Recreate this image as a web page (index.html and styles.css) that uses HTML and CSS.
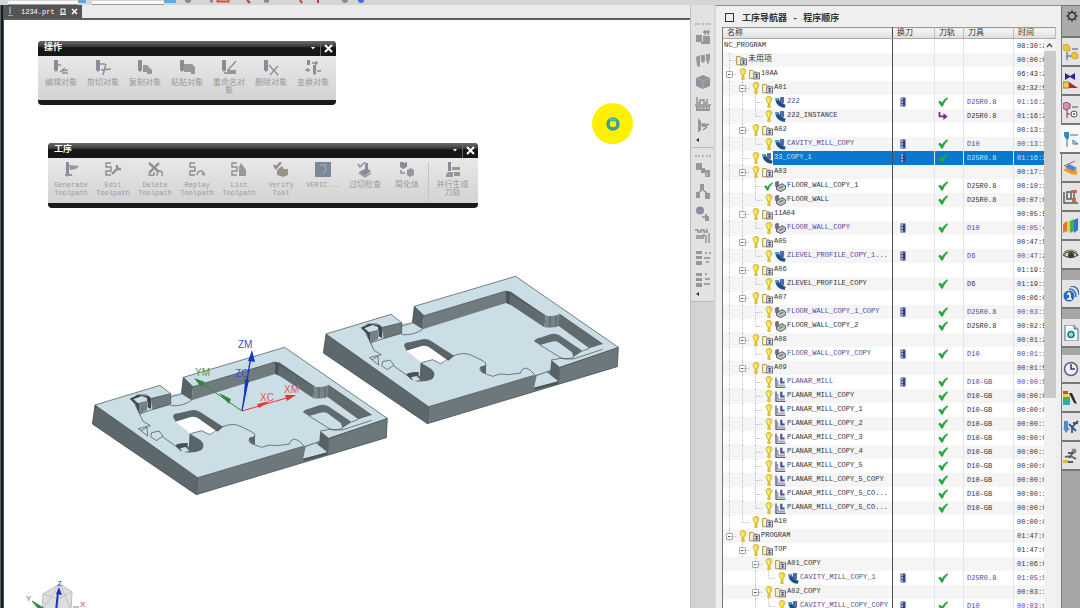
FILE: index.html
```
<!DOCTYPE html>
<html lang="zh-CN">
<head>
  <meta charset="UTF-8">
  <title>1234.prt</title>
  <link rel="stylesheet" href="styles.css">
</head>
<body>

  <!-- shared icons -->
  <svg class="sprite" aria-hidden="true">
    <symbol id="key" viewBox="0 0 8 12">
      <path d="M4 0.5C1.6 0.5 0.8 2 1.2 3.6L3 7.4V8.4H5V7.4L6.8 3.6C7.2 2 6.4 0.5 4 0.5Z" fill="#f3d83c" stroke="#c6a51d" stroke-width=".7"/>
      <path d="M2.8 2L3.6 6" stroke="#fffbc0" stroke-width="1"/>
      <circle cx="4" cy="10.4" r="1.5" fill="#f0cb25" stroke="#c09c18" stroke-width=".5"/>
    </symbol>
    <symbol id="check" viewBox="0 0 10 10">
      <path d="M0.6 5L2.2 4L4 6.2C5.2 3.8 7 2 9.4 0.8L9.5 1.8C7.4 3.6 5.6 6 4.6 9.2H3.4C2.8 7.6 1.8 6.2 0.6 5Z" fill="#22a63f" stroke="#22a63f" stroke-width=".8"/>
    </symbol>
    <symbol id="turn" viewBox="0 0 10 10">
      <path d="M1.5 1V5.4H6" fill="none" stroke="#7d2a8c" stroke-width="1.8"/>
      <path d="M5.4 2.2L9.6 5.6L5.4 9Z" fill="#7d2a8c"/>
    </symbol>
    <symbol id="change" viewBox="0 0 6 10">
      <rect x=".5" y=".5" width="5" height="9" fill="#3c4784"/>
      <rect x="1" y="1" width="2" height="8" fill="#96a2dc"/>
      <path d="M1 3.5H5M1 6.5H5" stroke="#262d60" stroke-width=".6"/>
    </symbol>
    <symbol id="folder" viewBox="0 0 11 10">
      <path d="M.6 1H4L5 2.4H7.4V9.2H.6Z" fill="#fbf3c4" stroke="#a28f4b" stroke-width=".9"/>
      <rect x="4.8" y="3.4" width="5.8" height="6" fill="#eee" stroke="#55556a" stroke-width=".8"/>
      <path d="M6 5.2H9.4M6 7.4H9.4M7.7 4.4V8.6" stroke="#444a70" stroke-width=".9"/>
    </symbol>
    <symbol id="cavity" viewBox="0 0 11 11">
      <path d="M.4 1.2C.4 6 3 10.2 9.8 10.7L10.6 7.4C6.8 7.6 4.4 5 4 1.6Z" fill="#1c4f86"/>
      <path d="M.4 1.2L4 1.6L3.4 3.4L.7 3.6Z" fill="#37a9cc"/>
      <path d="M5.4.4H8.6V5.6L7 7.2L5.4 5.6Z" fill="#5268b0" stroke="#27356e" stroke-width=".6"/>
      <path d="M8.6 6.6L10.4 8.4" stroke="#37a9cc"/>
    </symbol>
    <symbol id="floor" viewBox="0 0 11 11">
      <path d="M.6 1L3.4 .4V6L.6 5.4Z" fill="#73777e" stroke="#3e4148" stroke-width=".6"/>
      <path d="M1.6 6L7 2.6L10.6 4.8V7.8L5.8 10.6L1.6 8.6Z" fill="#c1c3c6" stroke="#474a50" stroke-width=".9"/>
      <path d="M3.4 7L7.4 4.4L9 5.6L5.4 8Z" fill="#82868c"/>
    </symbol>
    <symbol id="planar" viewBox="0 0 11 11">
      <path d="M1 .5V10.2H10.4" fill="none" stroke="#31335e" stroke-width="1.1"/>
      <path d="M2.8 3V8.2H10" fill="none" stroke="#6a6d96" stroke-width=".9"/>
      <path d="M5.2 .8H7.4V6.6H5.2ZM7.4 4.4H9.6V6.6H7.4Z" fill="#4d4f91"/>
    </symbol>
    <symbol id="part" viewBox="0 0 960 510">
      <path d="M48 207L243 148L275 175L309 172L313 124L617 34L925 247L922 305L352 476L40 264Z" fill="#cbdee5"/>
      <path d="M48 207L356 425L352 476L40 264Z" fill="#5c686b"/>
      <path d="M356 425L675 331L925 247L922 305L352 476Z" fill="#6c787b"/>
      <!-- upper pocket walls -->
      <path d="M313 124L342 152L338 193L307 173Z" fill="#566265"/>
      <path d="M342 152L588 78L588 114L338 193Z" fill="#6f7b7e"/>
      <path d="M588 78L602 80L602 120L588 114Z" fill="#4a5557"/>
      <path d="M600 78L707 152L703 187L598 117Z" fill="#5f6b6e"/>
      <path d="M707 152Q735 155 748 147V182Q730 190 703 187Z" fill="#788588"/>
      <path d="M748 147L878 237L838 250L745 182Z" fill="#5f6b6e"/>
      <path d="M275 183L309 173M275 209Q310 212 338 193M313 124L342 152M720 154V187M738 152V186" class="edge-line"/>
      <!-- small pocket -->
      <path d="M672 229Q676 220 690 218L724 207Q738 204 748 211L818 258L790 276L786 262L745 232Q738 226 724 230L690 240Z" fill="#5f6b6e"/>
      <path d="M690 240L750 277Q768 288 792 276M818 258L838 250" class="edge-line"/>
      <!-- through window -->
      <path d="M282 242Q284 232 298 232L338 223Q354 220 368 231L432 272L412 290L365 253Q352 240 335 245L290 257Z" fill="#596568"/>
      <path d="M290 257L335 243Q350 239 365 252L416 288L392 296L368 284L335 293Z" fill="#fff"/>
      <path d="M335 293L368 284L392 296L364 304Z" fill="#cbdee5"/>
      <path d="M333 293L364 312Q382 328 366 343Q342 353 313 348L330 330Z" fill="#596568"/>
      <path d="M288 329Q296 320 326 321L326 338L306 346Z" fill="#465154"/>
      <path d="M303 337L320 333L331 345L311 349Z" fill="#cbdee5"/>
      <path d="M250 302L288 329M335 293L368 284L392 296L432 272M333 293V330" class="edge-line"/>
      <!-- clamp blocks -->
      <path d="M218 187L275 173V205L220 221Z" fill="#6c787b"/>
      <path d="M152 188L178 176L208 180L218 190L216 219L206 214L206 196L180 204L181 234L170 206Z" fill="#3e484b"/>
      <path d="M163 190L188 180L204 186L204 195L177 202Z" fill="#cbdee5"/>
      <path d="M180 204L205 196V222L181 234Z" fill="#748185"/>
      <path d="M243 148L275 173L218 187L200 176L170 178M168 206Q184 236 192 256L214 269L178 278L206 300L204 274L186 284M215 302L218 290L240 285L252 300L232 314ZM220 221L275 205V173M181 234L220 221" class="edge-line"/>
      <!-- step contour -->
      <path d="M432 272Q460 260 482 270L516 286Q530 292 528 302L512 306Q504 320 526 326L548 334L570 327L596 329L632 324Q632 312 648 309Q660 311 676 331" class="edge-line"/>
      <path d="M512 306L528 301V326Q508 322 512 306Z" fill="#596568"/>
      <!-- front notch -->
      <path d="M724 285L750 307L747 352L720 328Z" fill="#566265"/>
      <path d="M672 368L680 333L711 322L745 349Z" fill="#cbdee5"/>
      <path d="M672 368L745 349V356L674 374Z" fill="#485356"/>
      <path d="M724 285L752 280L790 282L878 253M750 307L925 247" class="edge-line"/>
      <path d="M313 124L617 34L925 247L922 305L352 476L40 264L48 207L243 148M307 173L313 124M48 207L356 425L672 331M356 425L352 476M342 152L588 78L707 152M748 147L878 237" class="edge-line"/>
    </symbol>
  </svg>

  <div class="app">
    <header class="ribbon">
      <svg width="400" height="5" aria-hidden="true">
        <path d="M8 2.5H78M92 2.5H164" stroke="#f8f8f8" stroke-width="3"/>
        <path d="M8 4.5H78M92 4.5H164" stroke="#9a9a9a"/>
        <rect x="78" width="8" height="3" fill="#62a9da"/><rect x="164" width="12" height="3" fill="#62a9da"/>
        <circle cx="188" r="3" fill="#8a8a8a"/><path d="M217.500 0V1.500H228.500V0" fill="none" stroke="#d54d3c" stroke-width="2"/>
        <path d="M247 0L250 3M318 0V3M300 0L302 3" stroke="#c3373a" stroke-width="2"/>
        <path d="M264 1H269M210 1H213" stroke="#888" stroke-width="3"/>
        <circle cx="345" r="3" fill="#8d8d8d"/><circle cx="361" r="3" fill="#416fdc"/>
      </svg>
    </header>

    <div class="workspace">
      <div class="frame-edge"></div>

      <main class="graphics">
        <nav class="file-tabs">
          <button class="file-tab">
            <svg width="7" height="10" viewBox="0 0 7 10"><path d="M3 0V7" stroke="#8e8bc4" stroke-width="2"/><path d="M1 8.500H6" stroke="#9aa" /></svg>
            <span>1234.prt</span>
            <svg width="6" height="8" viewBox="0 0 6 8"><rect x="1" y="1" width="4" height="4" fill="none" stroke="#fff"/><path d="M0 6.500H6" stroke="#fff"/></svg>
            <svg width="7" height="7" viewBox="0 0 7 7"><path d="M1 1L6 6M6 1L1 6" stroke="#fff" stroke-width="1.600"/></svg>
          </button>
        </nav>

        <div class="viewport">
          <svg class="scene" aria-hidden="true">
            <g transform="translate(-4 -20)">
              <use href="#part" x="310" y="265" width="320" height="170"/>
              <use href="#part" x="79" y="336" width="320" height="170"/>

              <!-- work coordinate system -->
              <path d="M242 411L251 356" stroke="#1637c4" stroke-width="1.400"/>
              <path d="M252 350L255 362L248 361ZM245 379L249 380L243 408Z" fill="#1637c4"/>
              <path d="M242 411L290 397" stroke="#e23a36"/>
              <path d="M296 395L285 395L287 401ZM270 401L257 404L259 408Z" fill="#e23a36"/>
              <path d="M242 411L200 382" stroke="#2c8a35"/>
              <path d="M194 378L205 382L201 387ZM219 393L231 399L229 404Z" fill="#2c8a35"/>
              <g class="axis-text">
                <text x="238" y="348" fill="#3355cc">ZM</text>
                <text x="235" y="377" fill="#3355cc">ZC</text>
                <text x="260" y="401" fill="#e05550">XC</text>
                <text x="284" y="393" fill="#e05550">XM</text>
                <text x="195" y="376" fill="#4c9a55">YM</text>
              </g>

              <!-- view triad -->
              <path d="M43 594L60 584L72 592L71 612H42Z" fill="#dedede" stroke="#bcbcbc"/>
              <path d="M43 594L58 599L72 592M58 599V610M60 584L42 610M60 584L71 610" fill="none" stroke="#c2c2c2"/>
              <path d="M56 611L58 592" stroke="#1637c4" stroke-width="2"/>
              <path d="M59 587L62 595L56 594Z" fill="#1637c4"/>
              <path d="M32 601L45 609L39 609Z" fill="#2c8a35" stroke="#2c8a35"/>
              <path d="M73 607H79" stroke="#888"/>
              <g class="triad-text">
                <text x="57" y="586" fill="#3355cc">Z</text>
                <text x="26" y="601" fill="#4c7a55">Y</text>
                <text x="80" y="607" fill="#855">X</text>
              </g>
            </g>
          </svg>

          <div class="pointer">
            <svg width="14" height="14" viewBox="0 0 14 14"><circle cx="7" cy="7" r="5" fill="none" stroke="#379c9c" stroke-width="3.400"/><path d="M3.500 3.500A5 5 0 0 1 10.500 3.500" fill="none" stroke="#45c3c8" stroke-width="2"/></svg>
          </div>

          <section class="palette palette-object">
            <div class="palette-head">
              <h2>操作</h2>
              <button class="head-menu" aria-label="选项"><svg width="6" height="4"><path d="M1 0H5L3 2.500Z" fill="#fff"/></svg></button>
              <button class="head-close" aria-label="关闭"><svg width="9" height="9"><path d="M1 1L8 8M8 1L1 8" stroke="#fff" stroke-width="2"/></svg></button>
            </div>
            <div class="palette-body">
              <button class="tool"><svg viewBox="0 0 16 16"><path class="pin" d="M1 0H5V10L3 12L1 10Z"/><path d="M5 5H8M7 12L12 8M9 13H15M8 11L15 10" class="ln"/></svg>编辑对象</button>
              <button class="tool"><svg viewBox="0 0 16 16"><path class="pin" d="M1 0H5V10L3 12L1 10Z"/><path d="M5 4H10M11 4L8 15M6 10L16 9" class="ln"/></svg>剪切对象</button>
              <button class="tool"><svg viewBox="0 0 16 16"><path class="pin" d="M1 0H5V10L3 12L1 10Z"/><path class="fl" d="M6 5H10L12 7V12H6ZM10 8H13L15 10V14H10Z"/></svg>复制对象</button>
              <button class="tool"><svg viewBox="0 0 16 16"><path class="pin" d="M1 0H5V10L3 12L1 10Z"/><path class="fl" d="M5 4H13L16 7V14H12V12H5Z"/></svg>粘贴对象</button>
              <button class="tool"><svg viewBox="0 0 16 16"><path class="pin" d="M1 0H5V10L3 12L1 10Z"/><path d="M15 1L7 10M3 13H15M7 9V14" class="ln"/><path class="fl" d="M8 10H15V14H5Z"/></svg>重命名对象</button>
              <button class="tool"><svg viewBox="0 0 16 16"><path class="pin" d="M1 0H5V10L3 12L1 10Z"/><path d="M6 5L15 15M15 6L7 15" class="ln"/></svg>删除对象</button>
              <button class="tool"><svg viewBox="0 0 16 16"><path class="pin" d="M2 0H5V5H2ZM8 5H11V14L9 15L8 13Z"/><path d="M0 10H5M3 8V12M7 3H13M11 1V5M12 11H16" class="ln"/></svg>变换对象</button>
            </div>
          </section>

          <section class="palette palette-operation">
            <div class="palette-head">
              <h2>工序</h2>
              <button class="head-menu" aria-label="选项"><svg width="6" height="4"><path d="M1 0H5L3 2.500Z" fill="#fff"/></svg></button>
              <button class="head-close" aria-label="关闭"><svg width="9" height="9"><path d="M1 1L8 8M8 1L1 8" stroke="#fff" stroke-width="2"/></svg></button>
            </div>
            <div class="palette-body">
              <button class="tool"><svg viewBox="0 0 16 16"><path class="pin" d="M3 0H6V13L4 15L3 13Z"/><path class="fl" d="M6 3L16 4L13 7L7 8ZM2 12H9V14H2Z"/></svg>Generate Toolpath</button>
              <button class="tool"><svg viewBox="0 0 16 16"><path d="M6 1H1V5H6V9H1V13H6" class="ln"/><path d="M7 12L13 6M12 3V7H16" class="ln thick"/></svg>Edit Toolpath</button>
              <button class="tool"><svg viewBox="0 0 16 16"><path d="M2 1L12 10M12 1L2 11" class="ln thick"/><path d="M1 13H7V10M10 14Q10 9 13 9Q16 9 15 14" class="ln"/></svg>Delete Toolpath</button>
              <button class="tool"><svg viewBox="0 0 16 16"><path d="M6 1H1V5H6V9H1V13H6M8 13Q9 8 13 9L15 13" class="ln"/><path class="fl" d="M12 12L16 14V10Z"/></svg>Replay Toolpath</button>
              <button class="tool"><svg viewBox="0 0 16 16"><path d="M6 1H1V5H6V9H1V13H6" class="ln"/><path class="fl" d="M8 14V5L10 1L15 8V14Z"/></svg>List Toolpath</button>
              <button class="tool"><svg viewBox="0 0 16 16"><path d="M1 3L3 6L8 0" class="ln thick"/><path class="warm" d="M4 8L9 4L11 7H15V13L10 15L4 13Z"/></svg>Verify Tool</button>
              <button class="tool"><svg viewBox="0 0 16 16"><rect width="16" height="15" fill="#7a8898"/><path d="M5 3H10L11 8L8 12" fill="none" stroke="#8fa0ad" stroke-width="2"/></svg>VERIC...</button>
              <button class="tool cjk"><svg viewBox="0 0 16 16"><path d="M1 2L3 5L8 0" class="ln"/><path class="pin" d="M8 1H11V7L14 9L8 14L2 10L8 7Z"/><path d="M2 11L8 15L14 11" class="ln"/></svg>过切检查</button>
              <button class="tool cjk"><svg viewBox="0 0 16 16"><path class="pin" d="M1 0H4L5 1L8 0V5L4 7L1 5Z"/><path class="fl" d="M8 8L12 6L15 8V13L11 15L8 13Z"/><path d="M2 8V11H6" class="ln"/></svg>简化体</button>
              <button class="tool cjk parallel"><svg viewBox="0 0 16 16"><path class="pin" d="M3 0H6V9H3Z"/><path class="fl" d="M7 5H15V8H7ZM3 10H8V15H1V12ZM9 10H15V14H9Z"/></svg>并行生成刀轨</button>
            </div>
          </section>
        </div>
      </main>

      <aside class="side-tools">
        <div class="tool-group">
          <i class="grip"></i>
          <button aria-label="创建几何体"><svg viewBox="0 0 16 16"><path d="M1 5H7V12H1ZM8 6H15V14H6V12H8Z" class="fl"/><path d="M8 2H15M10 0V5M13 0V5" class="ln"/></svg></button>
          <button aria-label="创建刀具"><svg viewBox="0 0 16 16"><path d="M1 5L5 3V15L2 14ZM6 3H10V9L8 11L6 9ZM11 2H15V7L13 13L11 8Z" class="fl"/></svg></button>
          <button aria-label="创建工件"><svg viewBox="0 0 16 16"><path d="M1 4L8 1L15 4V12L8 15L1 12Z" fill="#92909a"/><path d="M1 4L8 7L15 4M8 7V15" fill="none" stroke="#aaa8b0"/></svg></button>
          <button aria-label="创建方法"><svg viewBox="0 0 16 16"><path d="M2 1V7H5V4H9V7H12V3M0 9H16" class="ln"/><path d="M1 10H15V15H1Z" class="fl"/><path d="M4 11V13M7 11V13M10 11V13M13 11V13" stroke="#ddd"/></svg></button>
          <button aria-label="创建工序"><svg viewBox="0 0 16 16"><path d="M3 0L6 3V12L3 15ZM6 5L15 6L11 9H7Z" class="fl"/><path d="M8 12L12 9" class="ln"/></svg></button>
          <i class="more"></i>
        </div>
        <div class="tool-group">
          <i class="grip"></i>
          <button aria-label="几何视图"><svg viewBox="0 0 16 16"><path d="M1 1H7V6H10V11H6V8H1ZM10 8H15V15H10Z" class="fl"/><path d="M12 10V14" stroke="#ccc"/></svg></button>
          <button aria-label="程序视图"><svg viewBox="0 0 16 16"><path d="M5 0H9V6H5ZM1 8H5V14H1ZM10 9H15V15H10Z" class="fl"/><path d="M7 6L3 9M8 6L12 9" class="ln"/></svg></button>
          <button aria-label="机床视图"><svg viewBox="0 0 16 16"><circle cx="5" cy="4.500" r="4" fill="#8f8d9c"/><path d="M10 8H12V10H14V15H10Z" class="fl"/><path d="M7 11H10" class="ln"/></svg></button>
          <button aria-label="方法视图"><svg viewBox="0 0 16 16"><path d="M0 2H3V4H6V2H9V4H12V1M1 8H9V6M11 7V15M14 5V15M1 10H9" class="ln"/></svg></button>
          <button aria-label="全部展开"><svg viewBox="0 0 16 16"><path d="M1 1H7V4H1ZM1 6H7V9H1ZM1 11H7V15H1Z" class="fl"/><path d="M10 3H12M14 3H16M9 8H15M11 12H14" class="ln"/></svg></button>
          <button aria-label="全部折叠"><svg viewBox="0 0 16 16"><path d="M1 1H7V4H1ZM1 6H7V9H1ZM1 11H7V15H1Z" class="fl"/><path d="M10 2H12M10 7H15M9 12H15" class="ln"/></svg></button>
          <i class="more"></i>
        </div>
      </aside>

      <section class="navigator">
        <div class="nav-title">
          <input type="checkbox" id="pinNav">
          <label for="pinNav">工序导航器 - 程序顺序</label>
        </div>
        <div class="nav-list">
          <table>
            <colgroup><col><col class="c-change"><col class="c-path"><col class="c-tool"><col class="c-time"></colgroup>
            <thead>
              <tr><th>名称</th><th>换刀</th><th>刀轨</th><th>刀具</th><th>时间</th></tr>
            </thead>
            <tbody id="operations"></tbody>
          </table>
          <div class="scrollbar">
            <svg width="11" height="12" viewBox="0 0 11 12"><path d="M3 8L5.500 5L8 8" fill="none" stroke="#444" stroke-width="1.200"/></svg>
            <div class="thumb"></div>
          </div>
        </div>
      </section>

      <nav class="resource-bar">
        <button class="gear" aria-label="设置"><svg viewBox="0 0 16 16"><circle cx="9" cy="8" r="3.500" fill="none" stroke="#333" stroke-width="1.500"/><path d="M9 2.500V4M9 12V13.500M3.500 8H5M13 8H14.500M5 4L6 5M13 4L12 5M5 12L6 11M13 12L12 11" stroke="#333" stroke-width="1.600"/></svg></button>
        <button aria-label="装配导航器"><svg viewBox="0 0 16 16"><path d="M0 1L4 0L7 3V7H2L0 5ZM9 9L12 8L15 10V14L11 15L8 13Z" fill="#f0c52c" stroke="#b58d1d" stroke-width=".6"/><path d="M4 8V16M4 12H8M9 5H15" stroke="#39578c" fill="none"/></svg></button>
        <button aria-label="约束导航器"><svg viewBox="0 0 16 16"><path d="M2 0L7 3L12 0V7L7 4L2 7Z" fill="#26279a"/><path d="M0 9H6V15H0Z" fill="#f3cb3a" stroke="#a37b22"/><path d="M6 9L15 15H6Z" fill="#c2232a"/></svg></button>
        <button aria-label="部件导航器"><svg viewBox="0 0 16 16"><path d="M0 2L3 0L7 2V6L3 8L0 6Z" fill="#d991b4" stroke="#92406d"/><path d="M4 8V16M4 12H7M9 5H15" stroke="#7b3d60"/><circle cx="11" cy="12" r="3" fill="#fff" stroke="#654459"/><circle cx="11" cy="12" r="1" fill="#654459"/></svg></button>
        <button class="current" aria-label="工序导航器"><svg viewBox="0 0 16 16"><path d="M1 1H6V7L4 9L1 5Z" fill="#328ac1"/><path d="M4 5V16M7 4H15M10 9L15 13H10Z" stroke="#3974a8" fill="#cce4f2"/></svg></button>
        <button aria-label="加工特征"><svg viewBox="0 0 16 16"><path d="M1 6L12 1" stroke="#b75372"/><path d="M0 10L5 7L14 10V15L8 14Z" fill="#ee992e"/><path d="M2 7L6 4L14 8L10 11Z" fill="#4d86ca"/></svg></button>
        <button aria-label="机床导航器"><svg viewBox="0 0 16 16"><path d="M1 3V14H15M4 3V10H8V3ZM11 1V13" fill="none" stroke="#5d5a5d" stroke-width="1.500"/><path d="M8 1H14V4H8ZM9 9H13V13H9Z" fill="#bd6b53"/></svg></button>
        <button aria-label="重用库"><svg viewBox="0 0 16 16"><path d="M0 6L4 3V13L0 15Z" fill="#e37a27"/><path d="M4 4L7 2V13L4 15Z" fill="#edd332"/><path d="M7 3L11 1V13L7 15Z" fill="#41ae60"/><path d="M11 2L15 0V12L11 15Z" fill="#3174cb"/></svg></button>
        <button aria-label="视图管理器"><svg viewBox="0 0 16 16"><path d="M0 8Q7 1 15 8Q8 13 0 8Z" fill="#e8dbc6" stroke="#5a5446" stroke-width="1.300"/><circle cx="8" cy="8" r="3" fill="#35442e"/><path d="M1 5Q7 1 14 5" stroke="#897a65" fill="none"/></svg></button>
        <span class="gap"></span>
        <button aria-label="HD3D 工具"><svg viewBox="0 0 16 16"><circle cx="6" cy="10" r="5.500" fill="#1e6dc2"/><path d="M4 8H7V13M4 13H9M6 6V7" stroke="#fff" fill="none" stroke-width="1.600"/><path d="M6 3Q13 3 13 11M7 0Q16 0 16 9" fill="none" stroke="#4271b5" stroke-width="1.500"/></svg></button>
        <span class="gap"></span>
        <button aria-label="浏览器"><svg viewBox="0 0 16 16"><path d="M2 0H11L15 4V16H2Z" fill="#fff" stroke="#487486"/><path d="M11 0V4H15" fill="#cbd" stroke="#487486"/><circle cx="8" cy="9.500" r="3" fill="#9bdcc1" stroke="#137b8b" stroke-width="1.600"/></svg></button>
        <span class="gap short"></span>
        <button aria-label="历史记录"><svg viewBox="0 0 16 16"><circle cx="8" cy="8" r="6.500" fill="#edf0fa" stroke="#656575" stroke-width="1.600"/><path d="M8 3V8H12" fill="none" stroke="#36405f" stroke-width="1.500"/></svg></button>
        <button aria-label="系统材料"><svg viewBox="0 0 16 16"><path d="M0 1H5V4H0Z" fill="#d94638"/><path d="M0 4H7V7H0Z" fill="#efd636"/><path d="M0 7H7V11H0Z" fill="#41b357"/><path d="M0 11H7V15H0Z" fill="#32a1d4"/><path d="M6 3L9 3L14 14L11 13Z" fill="#292c27"/></svg></button>
        <button aria-label="加工向导"><svg viewBox="0 0 16 16"><path d="M1 2H5V9H7L3 14L0 9H1Z" fill="#5289c9"/><path d="M6 5L13 12M15 2L9 8V14M10 4H15" stroke="#38577d" stroke-width="1.800" fill="none"/></svg></button>
        <button aria-label="角色"><svg viewBox="0 0 16 16"><circle cx="11" cy="3" r="2.500" fill="#85868b"/><path d="M5 5H10L6 10M2 9Q8 7 13 11M3 14H10" fill="none" stroke="#5a5b60" stroke-width="1.800"/><path d="M0 12H5V15H0Z" fill="#e3b24e"/></svg></button>
      </nav>
    </div>
  </div>

  <script src="script.js"></script>
</body>
</html>
```
FILE: styles.css
```
* {
  box-sizing: border-box;
}

body {
  margin: 0;
  font-family: "Liberation Mono", "Noto Sans CJK SC", monospace;
  font-size: 7px;
  color: #333;
}

button {
  margin: 0;
  padding: 0;
  border: none;
  background: none;
  font: inherit;
  color: inherit;
}

svg {
  display: block;
}

.sprite {
  position: absolute;
  width: 0;
  height: 0;
}

.app {
  display: flex;
  flex-direction: column;
  height: 100vh;
  overflow: hidden;
}

.ribbon {
  height: 5px;
  background: #d5d5d5;
  flex: none;
}

.workspace {
  display: flex;
  flex: 1;
  min-height: 0;
}

.frame-edge {
  width: 4px;
  background: linear-gradient(to right, #788286, #10191c 40%, #10191c 75%, #8b9294);
}

/* graphics window */
.graphics {
  display: flex;
  flex-direction: column;
  flex: 1;
  min-width: 0;
}

.file-tabs {
  display: flex;
  height: 15px;
  background: #ebebeb;
  border-bottom: 2px solid #5d5d5d;
  flex: none;
}

.file-tab {
  display: flex;
  align-items: center;
  gap: 5px;
  padding: 0 4px 0 3px;
  background: #545454;
  color: #fff;
}

.file-tab span {
  margin-left: 2px;
}

.viewport {
  position: relative;
  flex: 1;
  background: #fff;
  overflow: hidden;
}

.scene {
  position: absolute;
  width: 100%;
  height: 100%;
}

.edge-line {
  fill: none;
  stroke: #3c4649;
  stroke-width: 2;
}

.axis-text {
  font-family: "Liberation Sans", sans-serif;
  font-size: 10px;
}

.triad-text {
  font-family: "Liberation Sans", sans-serif;
  font-size: 8px;
}

.pointer {
  position: absolute;
  left: 588px;
  top: 83px;
  display: flex;
  align-items: center;
  justify-content: center;
  width: 41px;
  height: 41px;
  border-radius: 50%;
  background: #fff000;
}

/* floating tool palettes */
.palette {
  position: absolute;
  border-radius: 4px;
  background: #1a1a1a;
  padding-bottom: 5px;
  overflow: hidden;
}

.palette-object {
  left: 34px;
  top: 21px;
}

.palette-operation {
  left: 44px;
  top: 123px;
}

.palette-head {
  display: flex;
  align-items: center;
  height: 15px;
  padding-left: 6px;
  background: linear-gradient(#6c6c6c, #3d3d3d 35%, #161616 45%, #161616);
  color: #fff;
}

.palette-head h2 {
  flex: 1;
  margin: 0;
  font-size: 9px;
  line-height: 15px;
}

.head-menu {
  padding: 4px;
}

.head-close {
  padding: 3px;
  border-left: 1px solid #666;
}

.palette-body {
  display: flex;
  height: 44px;
  padding: 4px 2px 0;
  background: linear-gradient(#e8e8e8, #d3d3d3);
}

.tool {
  display: flex;
  flex-direction: column;
  align-items: center;
  gap: 3px;
  width: 42px;
  padding: 0 2px;
  color: #9a9a9a;
  line-height: 8px;
  text-align: center;
}

.palette-object .tool,
.cjk {
  font-size: 8px;
}

.tool svg {
  width: 16px;
  height: 16px;
  flex: none;
}

.palette-operation .tool {
  height: 40px;
}

.palette-operation .palette-body {
  height: 45px;
}

.parallel {
  width: 48px;
  padding: 0 6px;
  border-left: 1px solid #c3c3c3;
}

.pin {
  fill: #8d899b;
}

.fl {
  fill: #979797;
}

.warm {
  fill: #999382;
}

.ln {
  fill: none;
  stroke: #8f8f8f;
  stroke-width: 1.4;
}

.thick {
  stroke-width: 2.4;
}

/* vertical toolbar */
.side-tools {
  width: 25px;
  padding-right: 1px;
  background: #d3d3d3;
  border-left: 1px solid #bdbdbd;
  flex: none;
}

.tool-group {
  display: flex;
  flex-direction: column;
  align-items: center;
  padding-top: 7px;
  background: #e2e2e2;
  border-bottom: 1px solid #bbb;
}

.tool-group:first-child {
  padding-top: 18px;
}

.tool-group button {
  padding: 3px 0;
}

.tool-group svg {
  width: 16px;
  height: 16px;
}

.grip {
  width: 16px;
  height: 3px;
  margin-bottom: 1px;
  border-top: 2px dotted #b7b7b7;
}

.more {
  align-self: flex-start;
  margin: 1px 0 5px 5px;
  border: 2px solid transparent;
  border-right: 3px solid #333;
  border-left: none;
}

/* operation navigator */
.navigator {
  display: flex;
  flex-direction: column;
  width: 346px;
  padding: 0 5px 0 6px;
  background: #efefef;
  border-top: 1px solid #8f8f8f;
  border-left: 1px solid #ddd;
  flex: none;
}

.nav-title {
  display: flex;
  align-items: center;
  gap: 8px;
  height: 21px;
  padding: 2px 3px 0;
  font-size: 9px;
  font-weight: bold;
  flex: none;
}

.nav-title input {
  appearance: none;
  width: 9px;
  height: 9px;
  margin: 0;
  border: 1px solid #333;
}

.nav-list {
  position: relative;
  flex: 1;
  min-height: 0;
  overflow: hidden;
  background: #fff;
  border-left: 1px solid #777;
}

table {
  width: 100%;
  table-layout: fixed;
  border-collapse: collapse;
}

.c-change {
  width: 42px;
}

.c-path {
  width: 29px;
}

.c-tool {
  width: 50px;
}

.c-time {
  width: 42px;
}

th {
  height: 11px;
  padding: 0 4px;
  background: linear-gradient(#f6f6f6, #dedede);
  border-top: 1px solid #999;
  border-bottom: 1px solid #aaa;
  border-right: 1px solid #bbb;
  font-size: 8px;
  font-weight: normal;
  line-height: 10px;
  text-align: left;
}

td {
  height: 14px;
  padding: 0 3px;
  border-right: 1px solid #e4e4e4;
  line-height: 12px;
  white-space: nowrap;
  overflow: hidden;
}

tbody tr:nth-child(even) {
  background: #f5f5f5;
}

td:first-child,
th:first-child {
  border-right: 1px solid #4a4a4a;
}

td:first-child {
  padding: 0;
}

td:nth-child(2) {
  padding-left: 7px;
}

.name {
  display: flex;
  align-items: center;
  height: 14px;
}

.label {
  flex: 1;
  padding: 0 0 2px 1px;
}

.zh {
  font-size: 8px;
}

.guide {
  position: relative;
  display: flex;
  align-items: center;
  justify-content: center;
  width: 13px;
  height: 14px;
  flex: none;
}

.line::before,
.last::before {
  content: "";
  position: absolute;
  left: 6px;
  top: 0;
  height: 14px;
  border-left: 1px dotted #c4c4c4;
}

.last::before {
  height: 7px;
}

.tee::after,
.last::after {
  content: "";
  position: absolute;
  left: 7px;
  top: 7px;
  width: 6px;
  border-top: 1px dotted #c4c4c4;
}

.expander {
  position: relative;
  width: 7px;
  height: 7px;
  background: #fff;
  border: 1px solid #aaa;
  border-radius: 1px;
}

.expander.open::before {
  content: "";
  display: block;
  height: 1px;
  margin: 0 1px;
  background: #555;
}

.mark {
  display: flex;
  justify-content: center;
  width: 13px;
  flex: none;
}

.type {
  width: 11px;
  height: 11px;
  flex: none;
}

.programmed {
  color: #55469a;
}

.selected .label,
.selected td:not(:first-child) {
  background: #0878d0;
  color: #c8e6fa;
}

.scrollbar {
  position: absolute;
  top: 12px;
  right: 0;
  bottom: 0;
  width: 12px;
  background: #f2f2f2;
}

.thumb {
  height: 61%;
  background: #cacaca;
}

/* resource bar */
.resource-bar {
  display: flex;
  flex-direction: column;
  width: 19px;
  background: #a6a6a6;
  border-left: 1px solid #777;
  border-top: 1px solid #777;
  flex: none;
}

.resource-bar button {
  height: 29px;
  padding-left: 1px;
  background: #e4e4e4;
  border-bottom: 2px solid #777;
  flex: none;
}

.resource-bar svg {
  width: 16px;
  height: 16px;
}

.resource-bar .gear {
  height: 32px;
  padding-bottom: 10px;
  background: #aaa;
}

.resource-bar .current {
  margin-left: -2px;
  padding-left: 3px;
  background: #f7f7f7;
}

.gap {
  height: 10px;
  flex: none;
}

.short {
  height: 7px;
}
```
FILE: script.js
```
// guides: "|" line, "t" branch, "l" last branch, "-" open node, "o" empty node, " " nothing
const rows = [
  { guides: "", name: "NC_PROGRAM", time: "08:30:2" },
  { guides: "t", type: "folder", name: "未用项", time: "00:00:0", plain: true },
  { guides: "-", type: "folder", name: "10AA", time: "06:43:2" },
  { guides: "|-", type: "folder", name: "A01", time: "02:32:5" },
  { guides: "||t", type: "cavity", name: "222", change: true, path: "check", tool: "D25R0.8", time: "01:16:2" },
  { guides: "||l", type: "cavity", name: "222_INSTANCE", path: "turn", tool: "D25R0.8", time: "01:16:2" },
  { guides: "|-", type: "folder", name: "A02", time: "00:13:1" },
  { guides: "||l", type: "cavity", name: "CAVITY_MILL_COPY", change: true, path: "check", tool: "D10", time: "00:13:1" },
  { guides: "|t", type: "cavity", name: "33_COPY_1", change: true, path: "check", tool: "D25R0.8", time: "01:16:2", selected: true },
  { guides: "|-", type: "folder", name: "A03", time: "00:17:1" },
  { guides: "||t", type: "floor", name: "FLOOR_WALL_COPY_1", done: true, path: "check", tool: "D25R0.8", time: "00:10:1" },
  { guides: "||l", type: "floor", name: "FLOOR_WALL", path: "check", tool: "D25R0.8", time: "00:07:0" },
  { guides: "|o", type: "folder", name: "11A04", time: "00:05:5" },
  { guides: "||l", type: "floor", name: "FLOOR_WALL_COPY", change: true, path: "check", tool: "D10", time: "00:05:4" },
  { guides: "|-", type: "folder", name: "A05", time: "00:47:5" },
  { guides: "||l", type: "cavity", name: "ZLEVEL_PROFILE_COPY_1...", change: true, path: "check", tool: "D6", time: "00:47:2" },
  { guides: "|-", type: "folder", name: "A06", time: "01:19:1" },
  { guides: "||l", type: "cavity", name: "ZLEVEL_PROFILE_COPY", path: "check", tool: "D6", time: "01:19:1" },
  { guides: "|-", type: "folder", name: "A07", time: "00:06:0" },
  { guides: "||t", type: "floor", name: "FLOOR_WALL_COPY_1_COPY", change: true, path: "check", tool: "D25R0.8", time: "00:03:1" },
  { guides: "||l", type: "floor", name: "FLOOR_WALL_COPY_2", path: "check", tool: "D25R0.8", time: "00:02:5" },
  { guides: "|-", type: "folder", name: "A08", time: "00:01:2" },
  { guides: "||l", type: "floor", name: "FLOOR_WALL_COPY_COPY", change: true, path: "check", tool: "D10", time: "00:01:1" },
  { guides: "|-", type: "folder", name: "A09", time: "00:01:5" },
  { guides: "||t", type: "planar", name: "PLANAR_MILL", change: true, path: "check", tool: "D10-GB", time: "00:00:5" },
  { guides: "||t", type: "planar", name: "PLANAR_MILL_COPY", path: "check", tool: "D10-GB", time: "00:00:0" },
  { guides: "||t", type: "planar", name: "PLANAR_MILL_COPY_1", path: "check", tool: "D10-GB", time: "00:00:0" },
  { guides: "||t", type: "planar", name: "PLANAR_MILL_COPY_2", path: "check", tool: "D10-GB", time: "00:00:1" },
  { guides: "||t", type: "planar", name: "PLANAR_MILL_COPY_3", path: "check", tool: "D10-GB", time: "00:00:0" },
  { guides: "||t", type: "planar", name: "PLANAR_MILL_COPY_4", path: "check", tool: "D10-GB", time: "00:00:1" },
  { guides: "||t", type: "planar", name: "PLANAR_MILL_COPY_5", path: "check", tool: "D10-GB", time: "00:00:0" },
  { guides: "||t", type: "planar", name: "PLANAR_MILL_COPY_5_COPY", path: "check", tool: "D10-GB", time: "00:00:0" },
  { guides: "||t", type: "planar", name: "PLANAR_MILL_COPY_5_CO...", path: "check", tool: "D10-GB", time: "00:00:1" },
  { guides: "||l", type: "planar", name: "PLANAR_MILL_COPY_5_CO...", path: "check", tool: "D10-GB", time: "00:00:0" },
  { guides: "|l", type: "folder", name: "A10", time: "00:00:0" },
  { guides: "-", type: "folder", name: "PROGRAM", time: "01:47:0" },
  { guides: " -", type: "folder", name: "TOP", time: "01:47:0" },
  { guides: "  -", type: "folder", name: "A01_COPY", time: "01:06:0" },
  { guides: "  |l", type: "cavity", name: "CAVITY_MILL_COPY_1", change: true, path: "check", tool: "D25R0.8", time: "01:05:5" },
  { guides: "  -", type: "folder", name: "A02_COPY", time: "00:03:1" },
  { guides: "  |l", type: "cavity", name: "CAVITY_MILL_COPY_COPY", change: true, path: "check", tool: "D10", time: "00:03:0" }
];

const guideClass = { "|": "line", "t": "line tee", "l": "last", "-": "line tee", "o": "line tee", " ": "" };

function icon(id, width, height) {
  return `<svg width="${width}" height="${height}"><use href="#${id}"/></svg>`;
}

function guide(ch) {
  let inner = "";
  if (ch === "-") inner = '<button class="expander open" aria-label="折叠"></button>';
  if (ch === "o") inner = '<button class="expander" aria-label="展开"></button>';
  return `<span class="guide ${guideClass[ch]}">${inner}</span>`;
}

function nameCell(row) {
  let html = [...row.guides].map(guide).join("");
  if (row.type && !row.plain) {
    html += `<span class="mark">${row.done ? icon("check", 9, 9) : icon("key", 8, 12)}</span>`;
  }
  if (row.type) {
    html += `<svg class="type"><use href="#${row.type}"/></svg>`;
  }
  return `<div class="name">${html}<span class="label${row.plain ? " zh" : ""}">${row.name}</span></div>`;
}

document.getElementById("operations").innerHTML = rows.map(row => `
  <tr class="${row.change ? "programmed" : ""}${row.selected ? " selected" : ""}">
    <td>${nameCell(row)}</td>
    <td>${row.change ? icon("change", 6, 10) : ""}</td>
    <td>${row.path ? icon(row.path, 10, 10) : ""}</td>
    <td>${row.tool || ""}</td>
    <td>${row.time}</td>
  </tr>`).join("");
```
